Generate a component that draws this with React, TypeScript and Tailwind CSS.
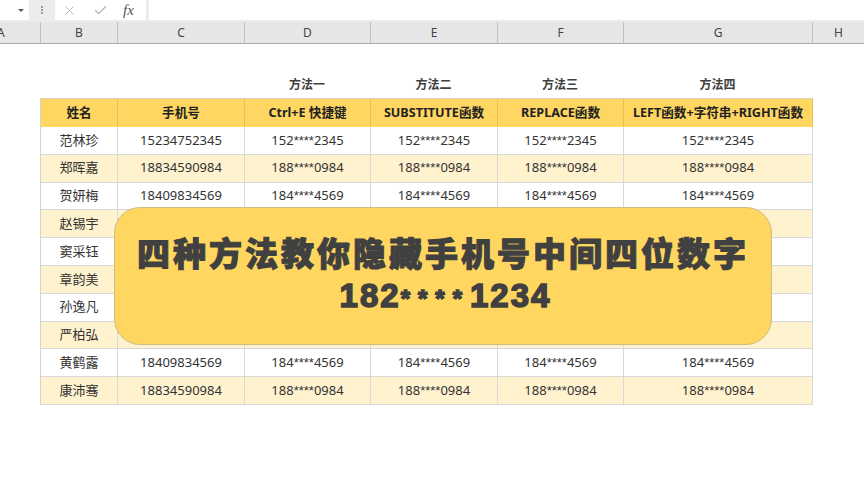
import { Check, X } from "lucide-react";

const cols = "grid-cols-[77px_127px_126px_127px_126px_189px]";
const cn = `"Noto Sans", "Noto Sans CJK SC", sans-serif`;

const letters = [
  { l: "B", w: "w-[77px]" },
  { l: "C", w: "w-[127px]" },
  { l: "D", w: "w-[126px]" },
  { l: "E", w: "w-[127px]" },
  { l: "F", w: "w-[126px]" },
  { l: "G", w: "w-[189px]" },
];

const heads = ["姓名", "手机号", "Ctrl+E 快捷键", "SUBSTITUTE函数", "REPLACE函数", "LEFT函数+字符串+RIGHT函数"];
const methods = ["", "", "方法一", "方法二", "方法三", "方法四"];

// rows 4-8 sit under the title card, only their names show
const rows = [
  { name: "范林珍", full: "15234752345", head: "152", tail: "2345" },
  { name: "郑晖嘉", full: "18834590984", head: "188", tail: "0984" },
  { name: "贺妍梅", full: "18409834569", head: "184", tail: "4569" },
  { name: "赵锡宇", full: "", head: "", tail: "" },
  { name: "窦采钰", full: "", head: "", tail: "" },
  { name: "章韵美", full: "", head: "", tail: "" },
  { name: "孙逸凡", full: "", head: "", tail: "" },
  { name: "严柏弘", full: "", head: "", tail: "" },
  { name: "黄鹤露", full: "18409834569", head: "184", tail: "4569" },
  { name: "康沛骞", full: "18834590984", head: "188", tail: "0984" },
];

export default function App() {
  return (
    <div className="relative h-[486px] w-[864px] overflow-hidden bg-white" style={{ fontFamily: cn }}>
      {/* formula bar */}
      <div className="flex h-[22px] items-stretch bg-[#ececec] pb-[2px]">
        <div className="flex w-[29px] items-center justify-end bg-white pr-[5px]">
          <div className="h-0 w-0 border-x-[3px] border-t-[3px] border-x-transparent border-t-[#555]" />
        </div>
        <div className="flex w-[26px] items-center justify-center">
          <div className="flex flex-col gap-px">
            <div className="h-[2px] w-[2px] bg-[#999]" />
            <div className="h-[2px] w-[2px] bg-[#999]" />
            <div className="h-[2px] w-[2px] bg-[#999]" />
          </div>
        </div>
        <div className="flex w-[91px] items-center bg-white pl-[7px] text-[#b4b4b4]">
          <X size={15} strokeWidth={1.5} />
          <Check size={15} strokeWidth={2} className="ml-[16px]" />
          <span className="ml-[15px] text-[15px] italic text-[#555]" style={{ fontFamily: `"Liberation Serif", serif` }}>
            fx
          </span>
        </div>
        <div className="ml-[3px] flex-1 bg-white" />
      </div>

      {/* column letters */}
      <div className="flex h-[22px] items-center border-b border-b-[#ababab] bg-[#e6e6e6] text-[12px] text-[#444]">
        <div className="flex h-full w-[41px] items-center border-r border-[#c0c0c0]">
          <span className="-ml-[3px]">A</span>
        </div>
        {letters.map((c) => (
          <div key={c.l} className={`flex h-full ${c.w} items-center justify-center border-r border-[#c0c0c0]`}>
            {c.l}
          </div>
        ))}
        <div className="flex-1 text-center">H</div>
      </div>

      {/* sheet */}
      <div className="pl-[40px] pt-[28px]">
        <div className={`grid w-[773px] ${cols} h-[26px] text-[12px] font-bold text-[#404040]`}>
          {methods.map((m, i) => (
            <div key={i} className="flex items-center justify-center">
              {m}
            </div>
          ))}
        </div>
        <div className="w-[773px] border-l border-t border-[#d6d2c8]">
          <div className={`grid ${cols} h-[28px] bg-[#ffd661] text-[12.6px] font-bold text-[#222]`}>
            {heads.map((h) => (
              <div key={h} className="flex items-center justify-center whitespace-nowrap border-r border-[#e6c25a]">
                {h}
              </div>
            ))}
          </div>
          {rows.map((r, i) => (
            <div
              key={r.name}
              className={`grid ${cols} h-[27.8px] border-b border-[#d8d8d8] text-[13px] text-[#333] ${
                i % 2 ? "bg-[#fff2cf]" : "bg-white"
              }`}
            >
              <div className="flex items-center justify-center border-r border-[#d8d8d8]">{r.name}</div>
              <div className="flex items-center justify-center border-r border-[#d8d8d8]">{r.full}</div>
              {[0, 1, 2, 3].map((k) => (
                <div key={k} className="flex items-center justify-center border-r border-[#d8d8d8]">
                  {r.head && (
                    <span>
                      {r.head}
                      <span className="font-['Liberation_Sans']">****</span>
                      {r.tail}
                    </span>
                  )}
                </div>
              ))}
            </div>
          ))}
        </div>
      </div>

      {/* title card over the sheet */}
      <div className="absolute left-[114px] top-[207px] flex h-[138px] w-[658px] flex-col items-center rounded-[26px] border border-[#cdbd87] bg-[#ffd65f] pt-[22px] text-[#404040]">
        <div
          className="whitespace-nowrap text-[33px] font-black leading-[44px] tracking-[3px] [-webkit-text-stroke:1px_#404040]"
          style={{ fontFamily: `"Noto Sans CJK SC", sans-serif` }}
        >
          四种方法教你隐藏手机号中间四位数字
        </div>
        <div
          className="mt-[3px] whitespace-nowrap pl-[5px] text-[33px] font-black leading-[38px] tracking-[2px] [-webkit-text-stroke:1.5px_#404040]"
          style={{ fontFamily: `"Liberation Sans", sans-serif` }}
        >
          182
          <span className="text-[24px] tracking-[8px]">****</span>
          1234
        </div>
      </div>
    </div>
  );
}
